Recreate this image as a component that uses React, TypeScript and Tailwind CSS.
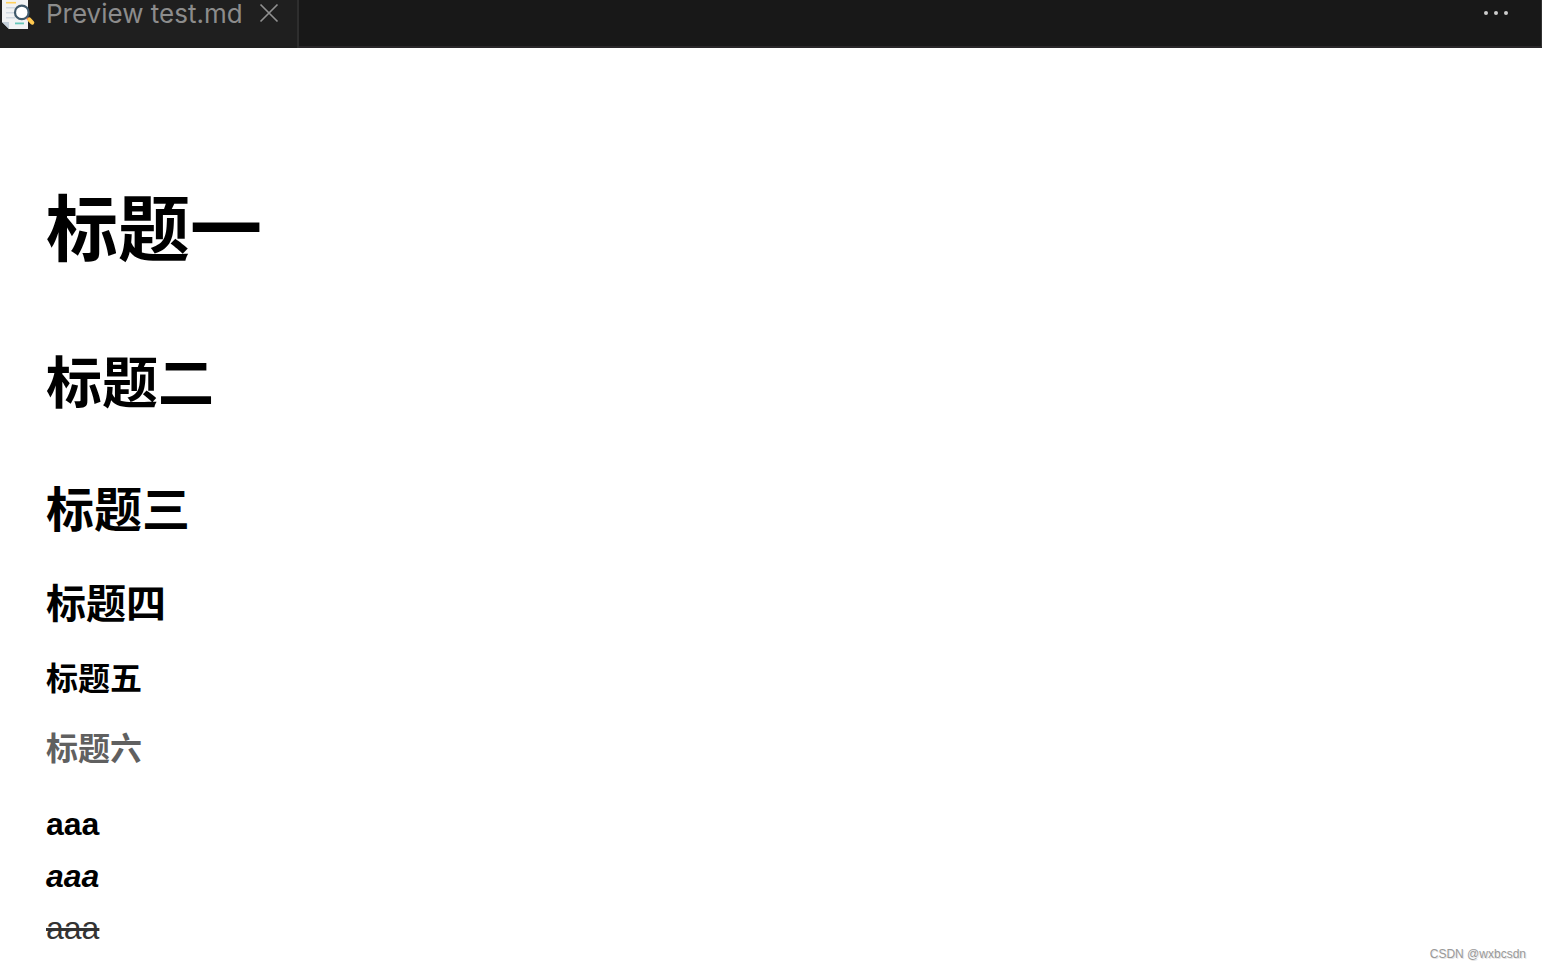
const headings = [
  { level: "h1", text: "标题一", className: "text-[72px] leading-[86px]" },
  { level: "h2", text: "标题二", className: "mt-[77px] text-[56px] leading-[68px]" },
  { level: "h3", text: "标题三", className: "mt-16 text-[48px] leading-[58px]" },
  { level: "h4", text: "标题四", className: "mt-10 text-[40px] leading-[48px]" },
  { level: "h5", text: "标题五", className: "mt-8 text-[32px] leading-[38px]" },
  { level: "h6", text: "标题六", className: "mt-8 text-[32px] leading-[38px] text-[#606060]" },
] as const;

function PreviewIcon() {
  return (
    <svg className="h-8 w-9 shrink-0" viewBox="0 0 36 32" fill="none" aria-hidden="true">
      <path d="M2 0h26v29H9l-7-7z" fill="#f1f2f3" />
      <path d="M2 22h7v7z" fill="#c5d0da" />
      <path d="M6 2.7h10" stroke="#ffd15c" strokeWidth="1.6" />
      <path d="M6 7.8h9M6 12.8h8M6 17.8h9" stroke="#d0d8e0" strokeWidth="1.6" />
      <path d="M15 23.4h9" stroke="#66c6b9" strokeWidth="1.8" />
      <path d="m27 18 2.5 2" stroke="#f05540" strokeWidth="2.4" />
      <path d="m29.4 19.6 2.8 3" stroke="#ffc84f" strokeWidth="4.2" strokeLinecap="round" />
      <circle cx="21.8" cy="12.4" r="6.8" fill="#fff" stroke="#40596b" strokeWidth="2.2" />
    </svg>
  );
}

function CloseIcon() {
  return (
    <svg
      className="h-[26px] w-5"
      viewBox="0 0 20 26"
      fill="none"
      stroke="currentColor"
      strokeWidth="1.7"
      aria-hidden="true"
    >
      <path d="m1.5 4.5 17 17M18.5 4.5l-17 17" />
    </svg>
  );
}

function TabBar() {
  return (
    <header className="flex h-12 items-stretch border-r border-b-2 border-r-[#333333] border-b-[#292729] bg-[#181818]">
      <div className="-mb-0.5 flex items-start border-r-2 border-[#2e2e2e] bg-[#1f1f1f] pr-[18px]">
        <PreviewIcon />
        <span className="ml-2.5 font-['Inter',sans-serif] text-[26px] leading-7 text-[#8c8c8c]">
          Preview test.md
        </span>
        <button type="button" aria-label="Close tab" className="ml-4 text-[#909090]">
          <CloseIcon />
        </button>
      </div>
      <button
        type="button"
        aria-label="More actions"
        className="mr-[33px] ml-auto flex h-[26px] items-center gap-1.5"
      >
        <span className="h-1 w-1 rounded-full bg-[#cccccc]" />
        <span className="h-1 w-1 rounded-full bg-[#cccccc]" />
        <span className="h-1 w-1 rounded-full bg-[#cccccc]" />
      </button>
    </header>
  );
}

export default function App() {
  return (
    <div className="relative min-h-screen bg-white font-['Liberation_Sans','Noto_Sans_CJK_SC',sans-serif] text-black">
      <TabBar />
      <main className="px-[46px] pt-[139px]">
        {headings.map(({ level: Heading, text, className }) => (
          <Heading key={text} className={`font-bold ${className}`}>
            {text}
          </Heading>
        ))}
        <p className="mt-[30px] text-[32px] leading-[52px]">
          <strong>aaa</strong>
          <br />
          <strong>
            <em>aaa</em>
          </strong>
          <br />
          <del className="text-[#333333] decoration-[3px]">aaa</del>
        </p>
      </main>
      <span className="absolute right-4 bottom-1.5 text-xs leading-4 text-[#999999] [text-shadow:1px_1px_0_#e5e5e5]">
        CSDN @wxbcsdn
      </span>
    </div>
  );
}
